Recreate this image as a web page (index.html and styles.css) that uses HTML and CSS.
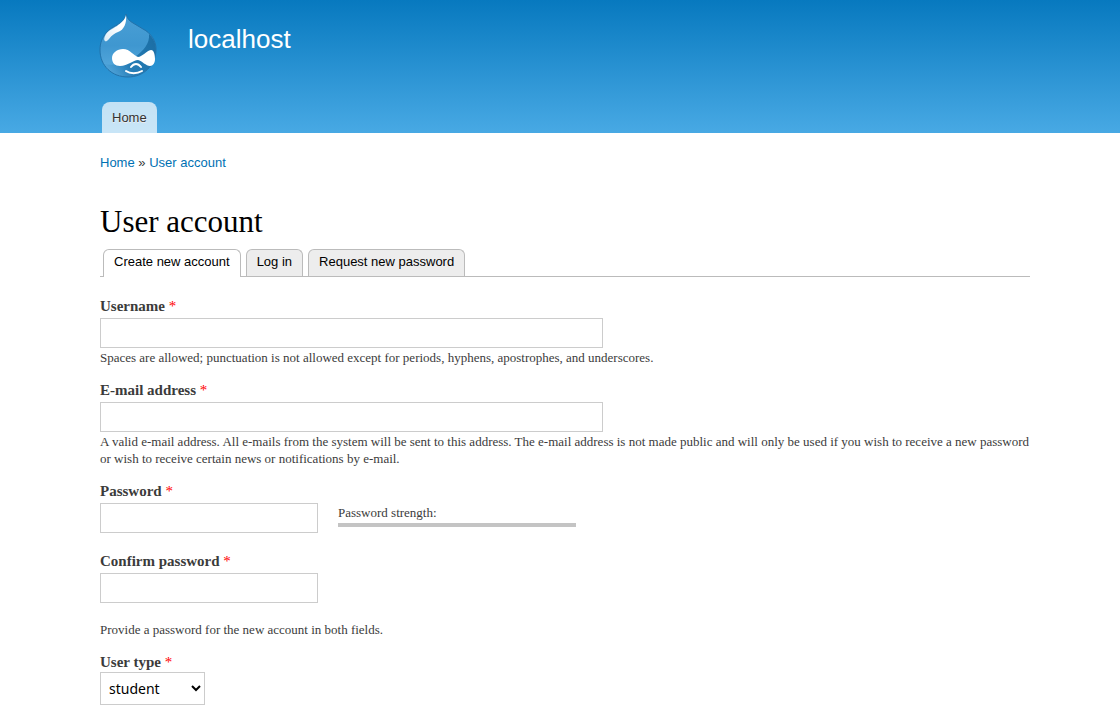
FILE: index.html
```html
<!DOCTYPE html>
<html lang="en">

<head>
    <meta charset="UTF-8">
    <meta name="viewport" content="width=device-width, initial-scale=1.0">
    <title>User account | localhost</title>
    <link rel="stylesheet" href="styles.css">
</head>

<body>
    <header class="header">
        <div class="branding">
            <a class="logo" href="#" aria-label="Home">
                <svg width="58" height="66" viewBox="0 0 58 66">
                    <defs>
                        <linearGradient id="drop" x1="0" y1="0" x2="0" y2="1">
                            <stop offset="0" stop-color="#4a9fd5"/>
                            <stop offset="0.5" stop-color="#3f97d0"/>
                            <stop offset="1" stop-color="#5cade0"/>
                        </linearGradient>
                        <linearGradient id="shade" x1="1" y1="0.3" x2="0" y2="0.7">
                            <stop offset="0" stop-color="#1c6fa6"/>
                            <stop offset="0.6" stop-color="#2179b3" stop-opacity="0.9"/>
                            <stop offset="1" stop-color="#2b86c0" stop-opacity="0.1"/>
                        </linearGradient>
                        <linearGradient id="shine" x1="1" y1="0" x2="0" y2="1">
                            <stop offset="0.4" stop-color="#fff"/>
                            <stop offset="1" stop-color="#fff" stop-opacity="0.8"/>
                        </linearGradient>
                    </defs>
                    <path d="M27 1C28 5 30 8 34 10C37 12 41 14 44 16C52 20 57 28 57 36C57 53 44 64 29 64C13 64 1 53 1 37C1 30 3 25 7 20C10 16 14 14 18 12C23 9 26 6 27 1Z" fill="url(#drop)"/>
                    <path d="M50 21C54 25 57 30 57 36C57 53 44 64 29 64C18 64 9 59 4 51C15 53 27 51 36 44C44 38 51 31 50 21Z" fill="url(#shade)"/>
                    <path d="M27 1C28 5 30 8 34 10C37 12 41 14 44 16C52 20 57 28 57 36C57 53 44 64 29 64C13 64 1 53 1 37C1 30 3 25 7 20C10 16 14 14 18 12C23 9 26 6 27 1Z" fill="none" stroke="#2272aa" stroke-width="1"/>
                    <path d="M27 2C26 7 22 10 18 13C13 16 8 18 6 23C4 27 6 31 10 26C13 22 16 20 19 19C25 17 28 10 27 2Z" fill="url(#shine)"/>
                    <path d="M24 36C31 36 35 43 39 44C43 44 47 38 52 37C55 37 56 42 56 46C56 50 54 53 51 53C47 53 43 48 39 47C34 47 29 53 21 53C16 53 13 50 13 45C13 40 18 36 24 36Z" fill="#fff"/>
                    <path d="M32 54C35 50 39 50 42 54" fill="none" stroke="#fff" stroke-width="2" stroke-linecap="round"/>
                    <path d="M27 58C31 61 38 61 43 58" fill="none" stroke="#fff" stroke-width="2" stroke-linecap="round"/>
                </svg>
            </a>
            <a class="site-name" href="#">localhost</a>
        </div>
        <nav class="main-menu">
            <a href="#">Home</a>
        </nav>
    </header>

    <main class="content">
        <nav class="breadcrumb">
            <a href="#">Home</a> » <a href="#">User account</a>
        </nav>

        <h1 class="page-title">User account</h1>

        <nav class="tabs">
            <a class="active" href="#">Create new account</a>
            <a href="#">Log in</a>
            <a href="#">Request new password</a>
        </nav>

        <form class="register-form">
            <div class="form-item">
                <label for="name">Username <span class="required">*</span></label>
                <input class="form-text" type="text" id="name" name="name">
                <p class="description">Spaces are allowed; punctuation is not allowed except for periods, hyphens, apostrophes, and underscores.</p>
            </div>

            <div class="form-item">
                <label for="mail">E-mail address <span class="required">*</span></label>
                <input class="form-text" type="text" id="mail" name="mail">
                <p class="description">A valid e-mail address. All e-mails from the system will be sent to this address. The e-mail address is not made public and will only be used if you wish to receive a new password or wish to receive certain news or notifications by e-mail.</p>
            </div>

            <!-- password and its confirmation -->
            <div class="form-item">
                <div class="password-row">
                    <div class="password-field">
                        <label for="pass1">Password <span class="required">*</span></label>
                        <input class="form-text" type="password" id="pass1" name="pass1">
                    </div>
                    <div class="password-strength">
                        <div class="strength-title">Password strength:</div>
                        <div class="strength-bar"></div>
                    </div>
                </div>
                <div class="password-field confirm">
                    <label for="pass2">Confirm password <span class="required">*</span></label>
                    <input class="form-text" type="password" id="pass2" name="pass2">
                </div>
                <p class="description">Provide a password for the new account in both fields.</p>
            </div>

            <div class="form-item">
                <label for="type">User type <span class="required">*</span></label>
                <select class="form-select" id="type" name="type">
                    <option>student</option>
                </select>
            </div>
        </form>
    </main>
</body>

</html>
```
FILE: styles.css
```css
* {
    box-sizing: border-box;
}

body {
    margin: 0;
    background: #fff;
    color: #3b3b3b;
    font-family: Georgia, "Liberation Serif", serif;
    font-size: 15px;
    line-height: 20px;
}

a {
    color: #0071b3;
    text-decoration: none;
}

/* header */
.header {
    padding: 13px 90px 0 99px;
    background: linear-gradient(to bottom, #0779bf 0%, #48a9e4 100%);
    font-family: "Liberation Sans", Arial, sans-serif;
}

.branding {
    display: flex;
    gap: 31px;
}

.logo,
.logo svg {
    display: block;
}

.site-name {
    padding-top: 11px;
    color: #fff;
    font-size: 26px;
    line-height: 30px;
}

.main-menu {
    display: flex;
    padding: 23px 3px 0;
}

.main-menu a {
    padding: 0 10px;
    border-radius: 8px 8px 0 0;
    background: rgba(255, 255, 255, 0.7);
    color: #333;
    font-size: 13px;
    line-height: 31px;
    text-shadow: 0 1px #eee;
}

/* content */
.content {
    padding: 20px 90px 12px 100px;
}

.breadcrumb {
    font-family: "Liberation Sans", Arial, sans-serif;
    font-size: 13px;
}

.page-title {
    margin: 32px 0 10px;
    color: #000;
    font-size: 31px;
    font-weight: normal;
    line-height: 34px;
}

.tabs {
    display: flex;
    gap: 5px;
    height: 28px;
    margin-bottom: 19px;
    padding: 0 3px;
    border-bottom: 1px solid #bbb;
    font-family: "Liberation Sans", Arial, sans-serif;
}

.tabs a {
    height: 27px;
    padding: 0 10px;
    border: 1px solid #bbb;
    border-bottom: 0;
    border-radius: 6px 6px 0 0;
    background: #ededed;
    color: #000;
    font-size: 13px;
    line-height: 24px;
}

/* the open tab covers the line under the tabs */
.tabs .active {
    height: 28px;
    background: #fff;
}

/* form */
.form-item {
    margin-bottom: 13px;
}

label {
    display: block;
    font-weight: bold;
    line-height: 20px;
}

.required {
    color: #f00;
    font-weight: normal;
}

.form-text {
    display: block;
    width: 100%;
    max-width: 503px;
    height: 30px;
    margin-top: 2px;
    padding: 4px;
    border: 1px solid #ccc;
    font-size: 15px;
}

.description {
    margin: 1px 0 0;
    padding-bottom: 1px;
    font-size: 13px;
    line-height: 17px;
}

.password-row {
    display: flex;
    gap: 20px;
}

.password-field {
    width: 218px;
}

.confirm {
    margin: 18px 0;
}

.password-strength {
    width: 238px;
    padding-top: 23px;
    font-size: 13px;
}

.strength-title {
    padding-bottom: 1px;
    line-height: 18px;
}

.strength-bar {
    height: 4px;
    background: #c4c4c4;
}

.form-select {
    display: block;
    width: 105px;
    height: 33px;
    padding: 4px;
    border: 1px solid #ccc;
    background: #fff;
    color: #000;
    font-family: "Noto Sans", sans-serif;
    font-size: 14px;
}
```
